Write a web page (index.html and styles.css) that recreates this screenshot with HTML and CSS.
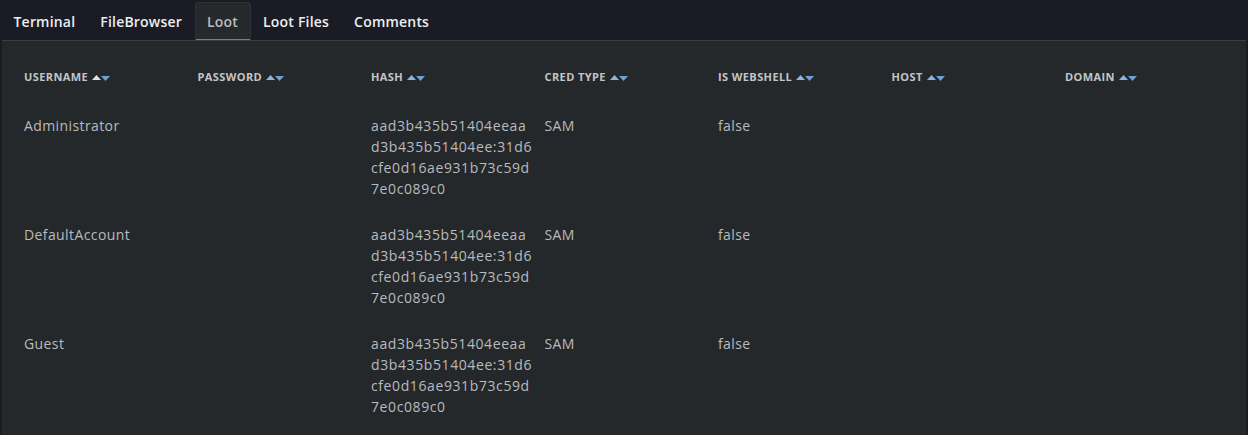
FILE: index.html
```html
<!DOCTYPE html>
<html>
<head>
<meta charset="utf-8">
<link rel="stylesheet" href="styles.css">
</head>
<body>
<div class="tabs">
  <div class="tab">Terminal</div>
  <div class="tab">FileBrowser</div>
  <div class="tab active">Loot</div>
  <div class="tab">Loot Files</div>
  <div class="tab">Comments</div>
</div>
<div class="panel">
  <div class="table">
    <div class="row head">
      <div class="cell">USERNAME <span class="sort"><svg width="19" height="7" viewBox="0 0 19 7"><path d="M0 6 L4.5 1 L9 6 Z" fill="#d6e2ee"/><path d="M9 2 L18 2 L13.5 7 Z" fill="#6e9fd6"/></svg></span></div>
      <div class="cell">PASSWORD <span class="sort"><svg width="19" height="7" viewBox="0 0 19 7"><path d="M0 6 L4.5 1 L9 6 Z" fill="#8fb4df"/><path d="M9 2 L18 2 L13.5 7 Z" fill="#6e9fd6"/></svg></span></div>
      <div class="cell">HASH <span class="sort"><svg width="19" height="7" viewBox="0 0 19 7"><path d="M0 6 L4.5 1 L9 6 Z" fill="#8fb4df"/><path d="M9 2 L18 2 L13.5 7 Z" fill="#6e9fd6"/></svg></span></div>
      <div class="cell">CRED TYPE <span class="sort"><svg width="19" height="7" viewBox="0 0 19 7"><path d="M0 6 L4.5 1 L9 6 Z" fill="#8fb4df"/><path d="M9 2 L18 2 L13.5 7 Z" fill="#6e9fd6"/></svg></span></div>
      <div class="cell">IS WEBSHELL <span class="sort"><svg width="19" height="7" viewBox="0 0 19 7"><path d="M0 6 L4.5 1 L9 6 Z" fill="#8fb4df"/><path d="M9 2 L18 2 L13.5 7 Z" fill="#6e9fd6"/></svg></span></div>
      <div class="cell">HOST <span class="sort"><svg width="19" height="7" viewBox="0 0 19 7"><path d="M0 6 L4.5 1 L9 6 Z" fill="#8fb4df"/><path d="M9 2 L18 2 L13.5 7 Z" fill="#6e9fd6"/></svg></span></div>
      <div class="cell">DOMAIN <span class="sort"><svg width="19" height="7" viewBox="0 0 19 7"><path d="M0 6 L4.5 1 L9 6 Z" fill="#8fb4df"/><path d="M9 2 L18 2 L13.5 7 Z" fill="#6e9fd6"/></svg></span></div>
    </div>
    <div class="row">
      <div class="cell">Administrator</div>
      <div class="cell"></div>
      <div class="cell hash">aad3b435b51404eeaa<br>d3b435b51404ee:31d6<br>cfe0d16ae931b73c59d<br>7e0c089c0</div>
      <div class="cell">SAM</div>
      <div class="cell">false</div>
      <div class="cell"></div>
      <div class="cell"></div>
    </div>
    <div class="row">
      <div class="cell">DefaultAccount</div>
      <div class="cell"></div>
      <div class="cell hash">aad3b435b51404eeaa<br>d3b435b51404ee:31d6<br>cfe0d16ae931b73c59d<br>7e0c089c0</div>
      <div class="cell">SAM</div>
      <div class="cell">false</div>
      <div class="cell"></div>
      <div class="cell"></div>
    </div>
    <div class="row">
      <div class="cell">Guest</div>
      <div class="cell"></div>
      <div class="cell hash">aad3b435b51404eeaa<br>d3b435b51404ee:31d6<br>cfe0d16ae931b73c59d<br>7e0c089c0</div>
      <div class="cell">SAM</div>
      <div class="cell">false</div>
      <div class="cell"></div>
      <div class="cell"></div>
    </div>
  </div>
</div>
</body>
</html>
```
FILE: styles.css
```css
html, body {
  margin: 0;
  padding: 0;
  background: #1a1b24;
  height: 100%;
  overflow: hidden;
}
body {
  font-family: "Open Sans", "Noto Sans", sans-serif;
  color: #b8bbbe;
}
.tabs {
  display: flex;
  height: 40px;
  padding: 2px 0 0 1px;
  box-sizing: border-box;
  align-items: stretch;
}
.tab {
  padding: 0 11.5px;
  font-size: 14px;
  font-weight: 600;
  letter-spacing: 0.2px;
  color: #eceef0;
  display: flex;
  align-items: center;
  box-sizing: border-box;
  border: 1px solid transparent;
  border-bottom: none;
  border-radius: 4px 4px 0 0;
}
.tab.active {
  background: #25292b;
  border-color: #2e3234;
  color: #b9bcbf;
  box-shadow: inset 0 -1px 0 #8c7b66;
}
.panel {
  margin-left: 2px;
  margin-right: 2px;
  background: #25282a;
  border-top: 1px solid #393e41;
  height: 400px;
  padding: 28px 14px 0 14px;
  box-sizing: border-box;
}
.row {
  display: grid;
  grid-template-columns: repeat(7, 173.5px);
  padding: 12px 0 13px;
  font-size: 14px;
  line-height: 21px;
  letter-spacing: 0.4px;
}
.row .hash {
  letter-spacing: 0.6px;
}
.row.head {
  padding: 0 0 18px;
  font-size: 11px;
  font-weight: 700;
  line-height: 16px;
  color: #c3c5c8;
  letter-spacing: 0.4px;
}
.cell {
  padding: 0 8px;
  white-space: nowrap;
}
.sort {
  display: inline-block;
  vertical-align: middle;
  margin-left: 1px;
  position: relative;
  top: -1px;
}
.sort svg {
  display: block;
}
```
